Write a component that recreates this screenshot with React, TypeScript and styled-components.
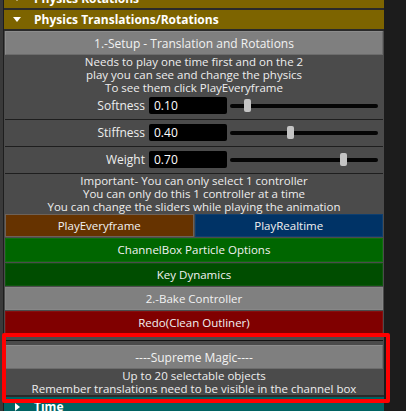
import * as React from 'react';
import styled, { createGlobalStyle } from 'styled-components';

const GlobalStyle = createGlobalStyle`
  html, body {
    margin: 0;
    padding: 0;
    background: #1c1c1c;
    overflow: hidden;
  }
  body {
    font-family: "Open Sans", "Noto Sans", sans-serif;
    font-size: 11.5px;
    color: #eeeeee;
  }
`;

const Page = styled.div`
  position: relative;
  display: flex;
  width: 406px;
  height: 411px;
  overflow: hidden;
`;

const Gutter = styled.div`
  width: 3px;
  background: #3a3a3a;
  border-right: 1px solid #1e1e1e;
  flex: none;
`;

const Column = styled.div`
  width: 380px;
  margin-top: -11px;
  display: flex;
  flex-direction: column;
  gap: 2px;
  background: #2a2a2a;
`;

const Header = styled.div<{ $bg: string }>`
  height: 19px;
  background: ${(p) => p.$bg};
  display: flex;
  align-items: center;
  font-weight: 700;
  font-size: 12px;
  color: #ffffff;
  flex: none;
`;

const Arrow = styled.span<{ $open?: boolean }>`
  width: 0;
  height: 0;
  margin: 0 13px 0 9px;
  ${(p) =>
    p.$open
      ? `border-left: 4px solid transparent;
         border-right: 4px solid transparent;
         border-top: 5px solid #fff;`
      : `border-top: 4px solid transparent;
         border-bottom: 4px solid transparent;
         border-left: 5px solid #fff;
         margin-left: 11px;
         margin-right: 14px;`}
`;

const Frame = styled.div`
  background: #4b4b4b;
  padding: 0 1px;
  display: flex;
  flex-direction: column;
  flex: none;
`;

const Button = styled.div<{ $bg: string; $border?: string }>`
  height: 23.25px;
  box-sizing: border-box;
  background: ${(p) => p.$bg};
  border: 1px solid ${(p) => p.$border ?? 'rgba(255,255,255,0.06)'};
  display: flex;
  align-items: center;
  justify-content: center;
  color: #f2f2f2;
  flex: none;
`;

const Title = styled(Button)`
  height: 24px;
  border-color: #8c8c8c #6c6c6c #6c6c6c #8c8c8c;
  font-size: 12px;
`;

const Stack = styled.div`
  display: flex;
  flex-direction: column;
  gap: 1px;
`;

const ButtonRow = styled.div`
  display: flex;
  gap: 1px;
  & > * {
    flex: 1;
  }
`;

const Note = styled.div<{ $pad?: string }>`
  text-align: center;
  line-height: 13px;
  padding: ${(p) => p.$pad ?? '0'};
`;

const SliderRow = styled.div<{ $top?: number }>`
  display: flex;
  align-items: center;
  padding: ${(p) => p.$top ?? 4}px 0 5px;
  border-bottom: 1px solid #1e1e1e;
`;

const Label = styled.span`
  width: 140px;
  text-align: right;
  font-size: 12px;
  flex: none;
`;

const Field = styled.div`
  width: 78px;
  height: 17px;
  margin-left: 4px;
  background: #000;
  border-radius: 2px;
  display: flex;
  align-items: center;
  padding-left: 5px;
  box-sizing: border-box;
  font-size: 12px;
  color: #fff;
  flex: none;
`;

const Track = styled.div`
  position: relative;
  width: 148px;
  height: 4px;
  margin-left: 3px;
  background: #050505;
  border-radius: 2px;
`;

const Handle = styled.div`
  position: absolute;
  top: -5px;
  width: 7px;
  height: 13px;
  margin-left: -3.5px;
  background: #c4c4c4;
  border-radius: 2px;
`;

const Separator = styled.div`
  height: 1px;
  background: #141414;
  margin: 6px 0 4px;
`;

const Highlight = styled.div`
  position: absolute;
  left: 2px;
  top: 333px;
  width: 380px;
  height: 62px;
  border: 4px solid #ff0000;
  border-radius: 2px;
  pointer-events: none;
`;

const sliders = [
  { label: 'Softness', value: '0.10', pos: 12, top: 3 },
  { label: 'Stiffness', value: '0.40', pos: 41 },
  { label: 'Weight', value: '0.70', pos: 77 },
];

const App: React.FC = () => (
  <>
    <GlobalStyle />
    <Page>
      <Gutter />
      <Column>
        <Header $bg="#7d6400">
          <Arrow $open />
          Physics Rotations
        </Header>
        <Header $bg="#7d6400">
          <Arrow $open />
          Physics Translations/Rotations
        </Header>
        <Frame>
          <Title $bg="#7f7f7f">1.-Setup - Translation and Rotations</Title>
          <Note>
            Needs to play one time first and on the 2
            <br />
            play you can see and change the physics
            <br />
            To see them click PlayEveryframe
          </Note>
          {sliders.map((s) => (
            <SliderRow key={s.label} $top={s.top}>
              <Label>{s.label}</Label>
              <Field>{s.value}</Field>
              <Track>
                <Handle style={{ left: `${s.pos}%` }} />
              </Track>
            </SliderRow>
          ))}
          <Note $pad="0 0 1px">
            Important- You can only select 1 controller
            <br />
            You can only do this 1 controller at a time
            <br />
            You can change the sliders while playing the animation
          </Note>
          <Stack>
            <ButtonRow>
              <Button $bg="#663300" $border="#6e6258">PlayEveryframe</Button>
              <Button $bg="#003366">PlayRealtime</Button>
            </ButtonRow>
            <Button $bg="#006600">ChannelBox Particle Options</Button>
            <Button $bg="#004d00">Key Dynamics</Button>
            <Button $bg="#808080">2.-Bake Controller</Button>
            <Button $bg="#800000">Redo(Clean Outliner)</Button>
          </Stack>
          <Separator />
          <Title $bg="#7f7f7f">----Supreme Magic----</Title>
          <Note>
            Up to 20 selectable objects
            <br />
            Remember translations need to be visible in the channel box
          </Note>
        </Frame>
        <Header $bg="#006363">
          <Arrow />
          Time
        </Header>
      </Column>
      <Highlight />
    </Page>
  </>
);

export default App;
